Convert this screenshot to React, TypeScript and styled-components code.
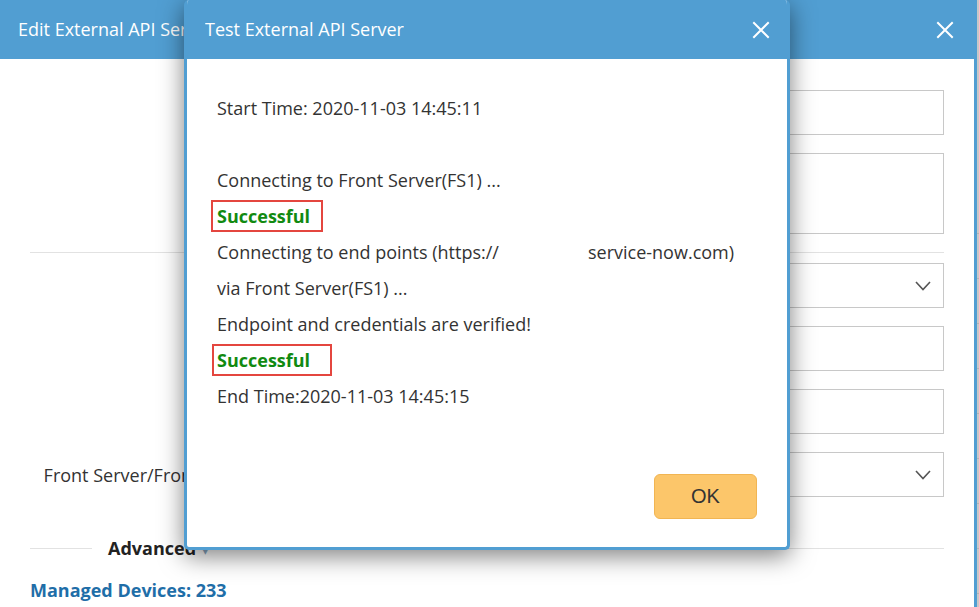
import styled, { createGlobalStyle } from "styled-components";

const BLUE = "#519ed2";

const GlobalStyle = createGlobalStyle`
  html, body {
    margin: 0;
    padding: 0;
    background: #ffffff;
  }
  body {
    font-family: "Open Sans", "Noto Sans", "DejaVu Sans", sans-serif;
    color: #333333;
  }
`;

//# 화면 전체
const Stage = styled.div`
  position: relative;
  display: flex;
  width: 979px;
  height: 607px;
  overflow: hidden;
  background: #c8c8c8;
`;

//# 뒤쪽 편집 창
const EditDialog = styled.section`
  flex: none;
  display: flex;
  flex-direction: column;
  width: 974px;
  border-right: 3px solid ${BLUE};
  background: #ffffff;
`;

const DialogHeader = styled.header<{ $padLeft: number; $padRight: number }>`
  flex: none;
  display: flex;
  align-items: center;
  justify-content: space-between;
  height: 59px;
  padding: 0 ${({ $padRight }) => $padRight}px 0 ${({ $padLeft }) => $padLeft}px;
  background: ${BLUE};
  color: #ffffff;
  box-sizing: border-box;
`;

const HeaderTitle = styled.h2`
  margin: 0 0 1px;
  font-size: 18px;
  font-weight: 400;
  white-space: nowrap;
  overflow: hidden;
`;

const CloseButton = styled.button`
  display: flex;
  padding: 0;
  border: 0;
  background: transparent;
  cursor: pointer;
`;

const EditBody = styled.div`
  flex: 1;
  display: flex;
  flex-direction: column;
  padding: 31px 30px 0 30px;
`;

const FormGrid = styled.div`
  display: grid;
  grid-template-columns: 285px 1fr;
  column-gap: 15px;
  row-gap: 18px;
  align-items: center;
`;

const FieldLabel = styled.label`
  text-align: right;
  font-size: 18px;
  white-space: nowrap;
`;

const TextBox = styled.div<{ $height: number }>`
  display: flex;
  align-items: center;
  justify-content: flex-end;
  height: ${({ $height }) => $height}px;
  padding-right: 12px;
  border: 1px solid #c8c8c8;
  box-sizing: border-box;
`;

const Divider = styled.hr`
  width: 100%;
  margin: 18px 0 10px;
  border: 0;
  border-top: 1px solid #e2e2e2;
`;

const Legend = styled.div`
  display: flex;
  align-items: center;
  gap: 16px;
  margin-top: 39px;
`;

const LegendLine = styled.span<{ $grow?: boolean }>`
  flex: ${({ $grow }) => ($grow ? 1 : "none")};
  width: 62px;
  border-top: 1px solid #e2e2e2;
`;

const LegendText = styled.span`
  font-size: 18px;
  font-weight: 700;
  color: #222222;
  white-space: nowrap;
`;

const Caret = styled.span`
  margin-left: 6px;
  font-size: 13px;
  color: #8aa9c4;
`;

const DeviceCount = styled.div`
  margin-top: 18px;
  font-size: 18px;
  font-weight: 700;
  color: #1f6ea8;
`;

//# 뒤의 페이지 조각
const BehindPage = styled.div`
  flex: 1;
  background:
    linear-gradient(#c8c8c8, #c8c8c8) 0 0 / 100% 198px no-repeat,
    repeating-linear-gradient(
      to bottom,
      #b4b4b4 0 1px,
      #c8c8c8 1px 45px
    ) 0 233px / 100% 100% no-repeat,
    #c8c8c8;
`;

//# 테스트 결과 창 (모달)
const TestDialog = styled.section`
  position: absolute;
  left: 184px;
  top: 0;
  display: flex;
  flex-direction: column;
  width: 606px;
  height: 550px;
  border: 3px solid ${BLUE};
  border-top: 0;
  border-radius: 5px;
  background: #ffffff;
  box-shadow: 0 6px 24px rgba(0, 0, 0, 0.5);
  box-sizing: border-box;
  overflow: hidden;
`;

const TestBody = styled.div`
  flex: 1;
  padding: 31px 30px 0 30px;
  font-size: 18px;
  line-height: 36px;
`;

const Line = styled.div`
  min-height: 36px;
  white-space: nowrap;
`;

const Redacted = styled.span`
  display: inline-block;
  width: 89px;
`;

const Flagged = styled.span<{ $padRight: number; $shift: number }>`
  display: inline-block;
  margin-left: ${({ $shift }) => -$shift}px;
  padding: 0 ${({ $padRight }) => $padRight}px 0 ${({ $shift }) => $shift - 2}px;
  border: 2px solid #e4463f;
  line-height: 28px;
  font-weight: 700;
  color: #118a11;
`;

const Footer = styled.footer`
  display: flex;
  justify-content: flex-end;
  padding: 0 30px 28px;
`;

const OkButton = styled.button`
  width: 103px;
  height: 45px;
  border: 1px solid #f1b553;
  border-radius: 6px;
  background: #fcc66a;
  color: #333333;
  font-family: "Liberation Sans", Arial, sans-serif;
  font-size: 20px;
  cursor: pointer;
`;

function CloseIcon() {
  return (
    <svg width="18" height="18" viewBox="0 0 18 18">
      <path
        d="M2 2 L16 16 M16 2 L2 16"
        stroke="#ffffff"
        strokeWidth="2"
        strokeLinecap="square"
        fill="none"
      />
    </svg>
  );
}

function ChevronIcon() {
  return (
    <svg width="16" height="10" viewBox="0 0 16 10">
      <polyline
        points="1,1 8,8.5 15,1"
        stroke="#555555"
        strokeWidth="1.6"
        fill="none"
      />
    </svg>
  );
}

type Field = { label: string; height: number; select?: boolean };

const generalFields: Field[] = [
  { label: "Name", height: 45 },
  { label: "Description", height: 81 },
];

const connectionFields: Field[] = [
  { label: "Authentication", height: 45, select: true },
  { label: "Username", height: 45 },
  { label: "Password", height: 45 },
  { label: "Front Server/Front Server Group", height: 45, select: true },
];

function Fields({ items }: { items: Field[] }) {
  return (
    <FormGrid>
      {items.map((f) => [
        <FieldLabel key={f.label + "-l"}>{f.label}</FieldLabel>,
        <TextBox key={f.label + "-i"} $height={f.height}>
          {f.select && <ChevronIcon />}
        </TextBox>,
      ])}
    </FormGrid>
  );
}

export default function App() {
  return (
    <>
      <GlobalStyle />
      <Stage>
        <EditDialog>
          <DialogHeader $padLeft={18} $padRight={20}>
            <HeaderTitle>Edit External API Server</HeaderTitle>
            <CloseButton aria-label="close">
              <CloseIcon />
            </CloseButton>
          </DialogHeader>
          <EditBody>
            <Fields items={generalFields} />
            <Divider />
            <Fields items={connectionFields} />
            <Legend>
              <LegendLine />
              <LegendText>
                Advanced<Caret>▾</Caret>
              </LegendText>
              <LegendLine $grow />
            </Legend>
            <DeviceCount>Managed Devices: 233</DeviceCount>
          </EditBody>
        </EditDialog>
        <BehindPage />

        <TestDialog>
          <DialogHeader $padLeft={18} $padRight={17}>
            <HeaderTitle>Test External API Server</HeaderTitle>
            <CloseButton aria-label="close">
              <CloseIcon />
            </CloseButton>
          </DialogHeader>
          <TestBody>
            <Line>Start Time: 2020-11-03 14:45:11</Line>
            <Line />
            <Line>Connecting to Front Server(FS1) ...</Line>
            <Line>
              <Flagged $shift={6} $padRight={11}>Successful</Flagged>
            </Line>
            <Line>
              Connecting to end points (https://<Redacted />service-now.com)
            </Line>
            <Line>via Front Server(FS1) ...</Line>
            <Line>Endpoint and credentials are verified!</Line>
            <Line>
              <Flagged $shift={5} $padRight={20}>Successful</Flagged>
            </Line>
            <Line>End Time:2020-11-03 14:45:15</Line>
          </TestBody>
          <Footer>
            <OkButton>OK</OkButton>
          </Footer>
        </TestDialog>
      </Stage>
    </>
  );
}
